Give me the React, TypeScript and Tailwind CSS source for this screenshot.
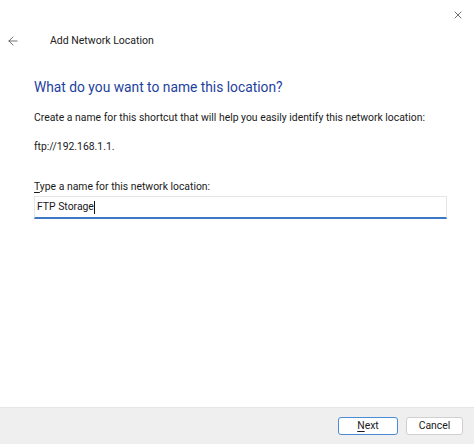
import { ArrowLeft, X } from 'lucide-react'

export default function App() {
  return (
    <div
      className="w-[474px] h-[444px] bg-white flex flex-col text-[#1a1a1a] overflow-hidden"
      style={{ fontFamily: 'Roboto, "Noto Sans", sans-serif' }}
    >
      {/* title bar */}
      <div className="h-[27px] flex justify-end items-center pr-[10px] pt-[2px]">
        <X size={12} strokeWidth={1.3} className="text-[#222]" />
      </div>

      {/* header */}
      <div className="h-[27px] flex items-center">
        <ArrowLeft size={14} strokeWidth={1.2} className="ml-[6px] text-[#333]" />
        <span className="ml-[30px] text-[10.5px] text-[#222]">Add Network Location</span>
      </div>

      {/* body */}
      <div className="flex-1 px-[34px] pt-[23px]">
        <h1 className="text-[13.8px] leading-[20px] text-[#1e3f9e]">
          What do you want to name this location?
        </h1>
        <p className="mt-[13px] text-[10.4px] leading-[16px] whitespace-nowrap">
          Create a name for this shortcut that will help you easily identify this network location:
        </p>
        <p className="mt-[13px] text-[10.4px] leading-[16px]">ftp://192.168.1.1.</p>

        <label className="block mt-[25px] text-[10.4px] leading-[14px]">
          <span className="underline underline-offset-2">T</span>ype a name for this network location:
        </label>
        <div className="mt-[2px] w-[413px] h-[23px] border border-[#e5e5e5] border-b-2 border-b-[#3b78c4] flex items-center pl-[2px] text-[10.4px]">
          FTP Storage
          <span className="inline-block w-px h-[13px] bg-[#111]" />
        </div>
      </div>

      {/* footer */}
      <div className="h-[37px] bg-[#efefef] border-t border-[#e6e6e6] flex items-center justify-end gap-[8px] pr-[11px]">
        <button className="w-[60px] h-[18px] bg-white border border-[#4a8bd6] rounded-[3px] text-[10.4px] leading-none">
          <span className="underline underline-offset-2">N</span>ext
        </button>
        <button className="w-[57px] h-[18px] bg-white border border-[#cfcfcf] rounded-[3px] text-[10.4px] leading-none">
          Cancel
        </button>
      </div>
    </div>
  )
}
